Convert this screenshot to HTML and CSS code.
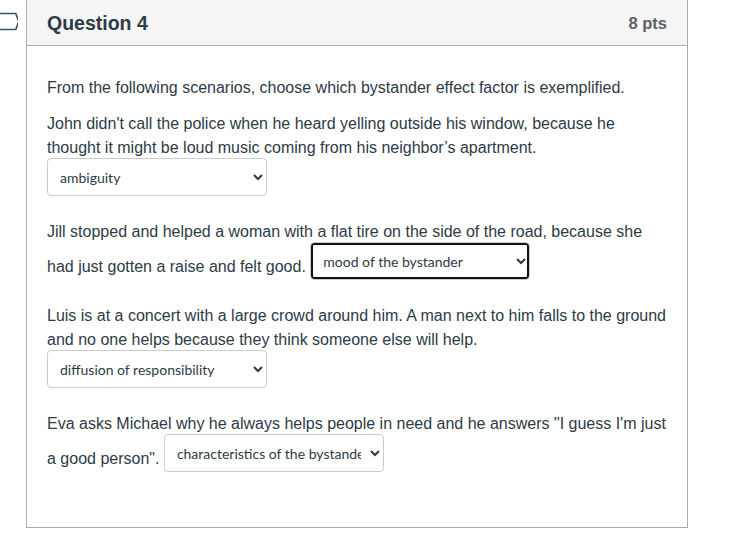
FILE: index.html
```html
<!DOCTYPE html>
<html lang="en">
<head>
<meta charset="utf-8">
<title>Question 4</title>
<link rel="stylesheet" href="styles.css">
</head>
<body>
<div class="page">
  <div class="flag-col">
    <svg class="flag" width="18" height="20" viewBox="-3 0 18 20" aria-hidden="true">
      <path d="M-4 1.5 H12.8 L15.8 9.5 L12.8 17.5 H-4 Z" fill="none" stroke="#3b5366" stroke-width="1.6" stroke-linejoin="miter"/>
    </svg>
  </div>
  <div class="question">
    <div class="q-header">
      <h2 class="q-title">Question 4</h2>
      <span class="q-pts">8 pts</span>
    </div>
    <div class="q-body">
      <p>From the following scenarios, choose which bystander effect factor is exemplified.</p>
      <p>John didn't call the police when he heard yelling outside his window, because he thought it might be loud music coming from his neighbor’s apartment.<br>
        <select class="answer"><option>ambiguity</option></select></p>
      <p>Jill stopped and helped a woman with a flat tire on the side of the road, because she had just gotten a raise and felt good. <select class="answer focused"><option>mood of the bystander</option></select></p>
      <p>Luis is at a concert with a large crowd around him. A man next to him falls to the ground and no one helps because they think someone else will help.<br>
        <select class="answer"><option>diffusion of responsibility</option></select></p>
      <p>Eva asks Michael why he always helps people in need and he answers "I guess I'm just a good person". <select class="answer"><option>characteristics of the bystander</option></select></p>
    </div>
  </div>
</div>
</body>
</html>
```

FILE: styles.css
```css
html, body {
  margin: 0;
  padding: 0;
  background: #ffffff;
}

.page {
  display: flex;
  align-items: flex-start;
  font-family: "Liberation Sans", Arial, sans-serif;
  color: #2d3b45;
}

.flag-col {
  width: 26px;
  flex: 0 0 26px;
  padding-top: 12px;
}

.flag {
  display: block;
}

.question {
  width: 660px;
  margin-top: -1px;
  border: 1px solid #adadad;
}

.q-header {
  height: 46px;
  box-sizing: border-box;
  padding: 1px 20px 0;
  display: flex;
  align-items: center;
  justify-content: space-between;
  background: #f5f5f5;
  border-bottom: 1px solid #adadad;
}

.q-title {
  margin: 0;
  font-size: 19.5px;
  font-weight: bold;
  color: #2d3b45;
}

.q-pts {
  font-size: 16.5px;
  font-weight: bold;
  color: #5b6267;
}

.q-body {
  padding: 18px 20px 31px;
}

.q-body p {
  margin: 12px 0;
  font-size: 16px;
  line-height: 24px;
}

.answer {
  width: 220px;
  height: 38px;
  box-sizing: border-box;
  margin: -2px 0 12px;
  padding: 0 6px 0 8px;
  vertical-align: middle;
  font-family: Lato, "Liberation Sans", sans-serif;
  font-size: 14px;
  color: #2d3b45;
  background: #ffffff;
  border: 1px solid #c7cdd1;
  border-radius: 4px;
}

.answer.focused {
  box-shadow: inset 0 0 0 2px #111111;
  border-color: #c7cdd1;
}
```
